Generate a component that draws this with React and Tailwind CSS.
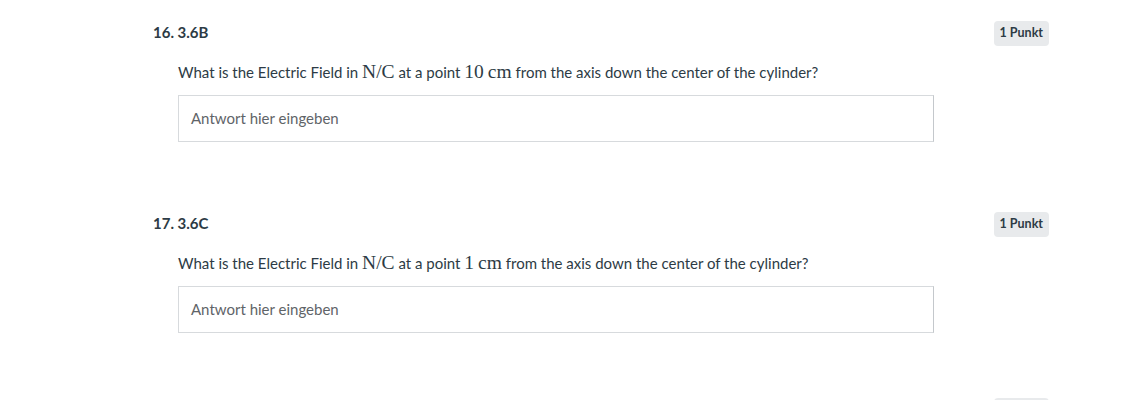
import React from "react";

const questions = [
  { num: "16. 3.6B", dist: "10" },
  { num: "17. 3.6C", dist: "1" },
];

function Math({ children }) {
  return (
    <span className="text-[19.5px] leading-none" style={{ fontFamily: '"Liberation Serif", "DejaVu Serif", serif' }}>
      {children}
    </span>
  );
}

function Question({ q }) {
  return (
    <div className="pt-[21px] h-[191px]">
      <div className="flex justify-between items-start h-[25px]">
        <h3 className="pt-[2px] text-[15px] font-bold leading-[18px] text-[#2d3b45]">{q.num}</h3>
        <span className="rounded-[4px] bg-[#e8eaec] px-[6px] h-[25px] flex items-center text-[12.5px] font-bold text-[#2d3b45]">
          1 Punkt
        </span>
      </div>
      <div className="pl-[25px]">
        <p className="mt-[16px] h-[20px] flex items-center text-[15px] text-[#2d3b45] whitespace-nowrap">
          <span>
            What is the Electric Field in <Math>N/C</Math> at a point <Math>{q.dist}</Math>
            <span className="inline-block w-[4px]" />
            <Math>cm</Math> from the axis down the center of the cylinder?
          </span>
        </p>
        <div className="mt-[13px] w-[756px] h-[47px] border border-[#d7dadd] border-r-[#c4c8cc] flex items-center px-[12px] text-[15px] text-[#5f6468]">
          Antwort hier eingeben
        </div>
      </div>
    </div>
  );
}

export default function App() {
  return (
    <div className="bg-white h-[400px] overflow-hidden" style={{ fontFamily: 'Lato, "Open Sans", sans-serif' }}>
      <div className="ml-[153px] w-[896px]">
        {questions.map((q, i) => (
          <Question key={i} q={q} />
        ))}
        {/* next question's points badge peeking in at the bottom edge */}
        <div className="pt-[16px] flex justify-end">
          <div className="w-[55px] h-[25px] rounded-[4px] bg-[#e8eaec]" />
        </div>
      </div>
    </div>
  );
}
